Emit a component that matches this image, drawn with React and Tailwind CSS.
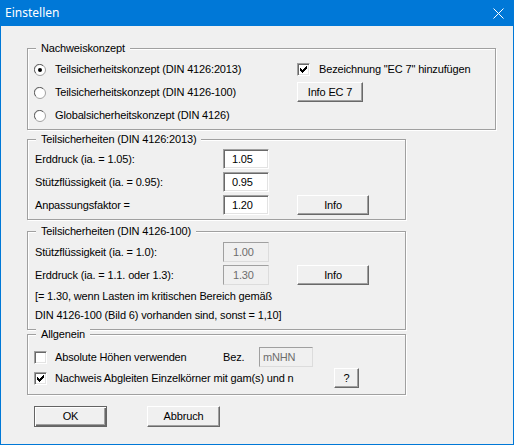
import React from 'react';

const sunken =
  'border border-t-[#a0a0a0] border-l-[#a0a0a0] border-r-white border-b-white shadow-[inset_1px_1px_0_#696969,inset_-1px_-1px_0_#e3e3e3]';

function Group({ label, className = '', children }) {
  return (
    <div className={`relative border border-[#a0a0a0] shadow-[inset_1px_1px_0_#fff,1px_1px_0_#fff] ${className}`}>
      <span className="absolute left-[8px] top-[-8px] bg-[#f0f0f0] px-[5px] leading-[14px] whitespace-nowrap">{label}</span>
      {children}
    </div>
  );
}

function Radio({ on }) {
  return (
    <svg width="12" height="12" viewBox="0 0 12 12" className="shrink-0">
      <circle cx="6" cy="6" r="5.5" fill="#fff" stroke="#a0a0a0" />
      <path d="M1.8 9 A4.6 4.6 0 0 1 9 1.8" fill="none" stroke="#696969" />
      {on && <circle cx="6" cy="6" r="2" fill="#000" />}
    </svg>
  );
}

function Check({ on }) {
  return (
    <span className={`w-[13px] h-[13px] shrink-0 bg-white flex items-center justify-center ${sunken}`}>
      {on && (
        <svg width="7" height="7" viewBox="0 0 7 7" shapeRendering="crispEdges">
          <path d="M0 2 L2 4 L6 0 L7 0 L7 2 L2 7 L0 5 Z" fill="#000" />
        </svg>
      )}
    </span>
  );
}

function Btn({ children, className = '', def }) {
  return (
    <button
      className={`flex items-center justify-center bg-[#f0f0f0] leading-none ${
        def
          ? 'border border-[#646464] shadow-[inset_1px_1px_0_#fff,inset_-1px_-1px_0_#696969,inset_-2px_-2px_0_#a0a0a0]'
          : 'border border-t-white border-l-white border-r-[#696969] border-b-[#696969] shadow-[inset_-1px_-1px_0_#a0a0a0]'
      } ${className}`}
    >
      {children}
    </button>
  );
}

function Field({ value, disabled, className = '' }) {
  return (
    <div
      className={`h-[20px] flex items-center ${
        disabled
          ? 'bg-[#f0f0f0] text-[#6d6d6d] border border-t-[#a0a0a0] border-l-[#a0a0a0] border-r-[#dcdcdc] border-b-[#dcdcdc]'
          : `bg-white ${sunken}`
      } ${className}`}
    >
      {value}
    </div>
  );
}

export default function App() {
  return (
    <div className="w-[514px] h-[445px] bg-[#f0f0f0] border-x border-b border-[#0078d7] text-[11px] text-black tracking-[-0.15px] font-['Liberation_Sans',Arial,sans-serif] flex flex-col overflow-hidden">
      {/* Title bar */}
      <div className="h-[26px] shrink-0 bg-[#0078d7] flex items-center justify-between pl-[4px] pr-[9px] text-white">
        <span className="text-[12px] tracking-normal font-['Noto_Sans',sans-serif]">Einstellen</span>
        <svg width="11" height="11" viewBox="0 0 11 11">
          <path d="M0.5 0.5 L10.5 10.5 M10.5 0.5 L0.5 10.5" stroke="#fff" strokeWidth="1" />
        </svg>
      </div>

      <div className="pl-[26px] pt-[22px] flex flex-col">
        <Group label="Nachweiskonzept" className="w-[469px] h-[82px] flex">
          <div className="w-[269px] pl-[6px] pt-[9px] flex flex-col">
            {[
              ['Teilsicherheitskonzept (DIN 4126:2013)', true],
              ['Teilsicherheitskonzept (DIN 4126-100)', false],
              ['Globalsicherheitskonzept (DIN 4126)', false],
            ].map(([t, on]) => (
              <div key={t} className="h-[23px] flex items-center gap-[9px]">
                <Radio on={on} />
                <span>{t}</span>
              </div>
            ))}
          </div>
          <div className="pt-[9px] flex flex-col">
            <div className="h-[23px] flex items-center gap-[9px]">
              <Check on />
              <span>Bezeichnung "EC 7" hinzufügen</span>
            </div>
            <Btn className="mt-[1px] w-[66px] h-[20px]">Info EC 7</Btn>
          </div>
        </Group>

        <Group label="Teilsicherheiten (DIN 4126:2013)" className="mt-[9px] w-[379px] h-[81px] pt-[9px] pl-[7px] flex flex-col gap-[3px]">
          <div className="h-[20px] flex items-center">
            <span className="w-[188px]">Erddruck (ia. = 1.05):</span>
            <Field value="1.05" className="w-[46px] pl-[8px]" />
          </div>
          <div className="h-[20px] flex items-center">
            <span className="w-[188px]">Stützflüssigkeit (ia. = 0.95):</span>
            <Field value="0.95" className="w-[46px] pl-[8px]" />
          </div>
          <div className="h-[20px] flex items-center">
            <span className="w-[188px]">Anpassungsfaktor =</span>
            <Field value="1.20" className="w-[46px] pl-[8px]" />
            <Btn className="ml-[28px] w-[72px] h-[20px]">Info</Btn>
          </div>
        </Group>

        <Group label="Teilsicherheiten (DIN 4126-100)" className="mt-[11px] w-[379px] h-[99px] pt-[10px] pl-[7px] flex flex-col">
          <div className="h-[20px] flex items-center">
            <span className="w-[188px]">Stützflüssigkeit (ia. = 1.0):</span>
            <Field value="1.00" disabled className="w-[46px] pl-[9px]" />
          </div>
          <div className="mt-[3px] h-[20px] flex items-center">
            <span className="w-[188px]">Erddruck (ia. = 1.1. oder 1.3):</span>
            <Field value="1.30" disabled className="w-[46px] pl-[9px]" />
            <Btn className="ml-[28px] w-[72px] h-[20px]">Info</Btn>
          </div>
          <div className="mt-[2px] leading-[19px]">
            <div>[= 1.30, wenn Lasten im kritischen Bereich gemäß</div>
            <div>DIN 4126-100 (Bild 6) vorhanden sind, sonst = 1,10]</div>
          </div>
        </Group>

        <Group label="Allgenein" className="mt-[4px] w-[379px] h-[61px] pt-[12px] pl-[6px] flex flex-col gap-[1px]">
          <div className="h-[20px] flex items-center">
            <Check />
            <span className="ml-[8px] w-[168px]">Absolute Höhen verwenden</span>
            <span className="w-[36px]">Bez.</span>
            <Field value="mNHN" disabled className="w-[54px] pl-[3px]" />
          </div>
          <div className="h-[20px] flex items-center">
            <Check on />
            <span className="ml-[8px] w-[279px]">Nachweis Abgleiten Einzelkörner mit gam(s) und n</span>
            <Btn className="w-[25px] h-[20px]">?</Btn>
          </div>
        </Group>

        <div className="mt-[11px] flex">
          <Btn def className="ml-[7px] w-[73px] h-[21px]">OK</Btn>
          <Btn className="ml-[40px] w-[73px] h-[21px]">Abbruch</Btn>
        </div>
      </div>
    </div>
  );
}
